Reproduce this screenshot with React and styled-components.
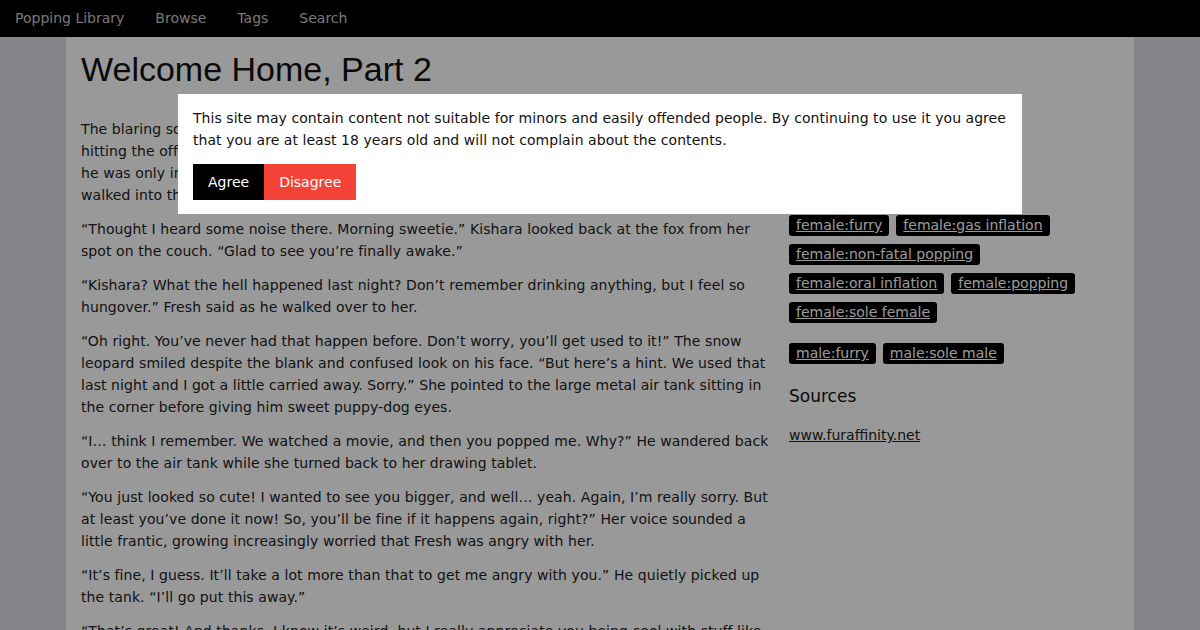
import styled, { createGlobalStyle } from 'styled-components';

const GlobalStyle = createGlobalStyle`
    html, body {
        margin: 0;
        padding: 0;
        background: #dedce5;
        font-family: "DejaVu Sans", Verdana, sans-serif;
        color: #222;
    }
`;

const paragraphs = [
    "The blaring sound of the alarm clock echoed through the bedroom, and Fresh groaned before hitting the off button on his phone. His head was pounding, and it took him a bit to realize that he was only in his underwear. Rubbing his eyes, the fox got out of bed, yawned, and slowly walked into the living room.",
    "“Thought I heard some noise there. Morning sweetie.” Kishara looked back at the fox from her spot on the couch. “Glad to see you’re finally awake.”",
    "“Kishara? What the hell happened last night? Don’t remember drinking anything, but I feel so hungover.” Fresh said as he walked over to her.",
    "“Oh right. You’ve never had that happen before. Don’t worry, you’ll get used to it!” The snow leopard smiled despite the blank and confused look on his face. “But here’s a hint. We used that last night and I got a little carried away. Sorry.” She pointed to the large metal air tank sitting in the corner before giving him sweet puppy-dog eyes.",
    "“I… think I remember. We watched a movie, and then you popped me. Why?” He wandered back over to the air tank while she turned back to her drawing tablet.",
    "“You just looked so cute! I wanted to see you bigger, and well… yeah. Again, I’m really sorry. But at least you’ve done it now! So, you’ll be fine if it happens again, right?” Her voice sounded a little frantic, growing increasingly worried that Fresh was angry with her.",
    "“It’s fine, I guess. It’ll take a lot more than that to get me angry with you.” He quietly picked up the tank. “I’ll go put this away.”",
    "“That’s great! And thanks. I know it’s weird, but I really appreciate you being cool with stuff like this. You’re the best boyfriend ever.”",
];

const tagGroups = [
    ['artist:kishara', 'species:fox'],
    ['female:furry', 'female:gas inflation', 'female:non-fatal popping', 'female:oral inflation', 'female:popping', 'female:sole female'],
    ['male:furry', 'male:sole male'],
];

function App() {
    return (
        <>
            <GlobalStyle />
            <NavBar>
                <NavLink href="#">Popping Library</NavLink>
                <NavLink href="#">Browse</NavLink>
                <NavLink href="#">Tags</NavLink>
                <NavLink href="#">Search</NavLink>
            </NavBar>
            <Page>
                <Title>Welcome Home, Part 2</Title>
                <Columns>
                    <Story>
                        {paragraphs.map((p, i) => <Paragraph key={i}>{p}</Paragraph>)}
                    </Story>
                    <Sidebar>
                        <SideHeading>Tags</SideHeading>
                        {tagGroups.map((group, i) => (
                            <TagGroup key={i}>
                                {group.map(t => <Tag key={t} href="#">{t}</Tag>)}
                            </TagGroup>
                        ))}
                        <SideHeading>Sources</SideHeading>
                        <SourceLink href="#">www.furaffinity.net</SourceLink>
                    </Sidebar>
                </Columns>
            </Page>
            <Overlay>
                <Modal>
                    <ModalText>
                        This site may contain content not suitable for minors and easily offended people. By continuing to use it you agree that you are at least 18 years old and will not complain about the contents.
                    </ModalText>
                    <ButtonRow>
                        <ModalButton>Agree</ModalButton>
                        <ModalButton $danger>Disagree</ModalButton>
                    </ButtonRow>
                </Modal>
            </Overlay>
        </>
    );
}

const NavBar = styled.nav`
    display: flex;
    align-items: center;
    height: 37px;
    background: #000;
`;

const NavLink = styled.a`
    padding: 0 15.5px;
    color: #c8c8c8;
    font-size: 14px;
    line-height: 37px;
    text-decoration: none;

    &:first-child {
        padding-left: 15px;
    }
`;

const Page = styled.main`
    width: 1068px;
    margin: 0 auto;
    padding: 12px 15px 0;
    box-sizing: border-box;
    background: #fff;
    min-height: 593px;
`;

const Title = styled.h1`
    margin: 0 0 29px;
    font-family: "Liberation Sans", Arial, sans-serif;
    font-size: 34px;
    font-weight: normal;
    line-height: 40px;
    color: #111;
`;

const Columns = styled.div`
    display: flex;
    gap: 16px;
    align-items: flex-start;
`;

const Story = styled.article`
    width: 692px;
    flex-shrink: 0;
`;

const Paragraph = styled.p`
    margin: 0 0 12px;
    font-size: 14px;
    letter-spacing: 0.08px;
    line-height: 22px;
`;

const Sidebar = styled.aside`
    flex: 1;
    padding-top: 16px;
`;

const SideHeading = styled.h3`
    margin: 0 0 16px;
    font-size: 17px;
    font-weight: normal;
    line-height: 24px;
    color: #111;
`;

const TagGroup = styled.div`
    display: flex;
    flex-wrap: wrap;
    gap: 8px 7px;
    margin-bottom: 20px;

    & + h3 {
        margin-top: 0;
        margin-bottom: 17px;
    }
`;

const Tag = styled.a`
    background: #000;
    color: #fff;
    border-radius: 3px;
    padding: 0 7px;
    font-size: 14px;
    line-height: 21px;
`;

const SourceLink = styled.a`
    color: #222;
    font-size: 14px;
`;

const Overlay = styled.div`
    position: fixed;
    inset: 0;
    background: rgba(0, 0, 0, 0.4);
    display: flex;
    justify-content: center;
    align-items: flex-start;
    padding-top: 94px;
`;

const Modal = styled.div`
    width: 844px;
    box-sizing: border-box;
    background: #fff;
    padding: 13px 14px 14px 15px;
`;

const ModalText = styled.p`
    margin: 0 0 13px;
    font-size: 14px;
    letter-spacing: 0.05px;
    line-height: 22px;
    color: #111;
`;

const ButtonRow = styled.div`
    display: flex;
`;

const ModalButton = styled.button`
    border: none;
    padding: 0 15px;
    height: 36px;
    font-family: "DejaVu Sans", Verdana, sans-serif;
    font-size: 14px;
    color: #fff;
    background: ${p => p.$danger ? '#f44336' : '#000'};
`;

export default App;
